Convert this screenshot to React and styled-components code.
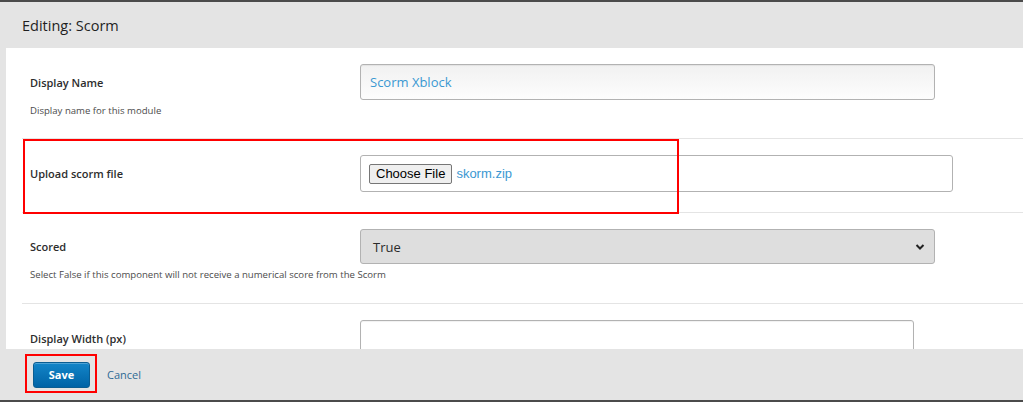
import React from 'react';
import styled, { createGlobalStyle } from 'styled-components';

const GlobalStyle = createGlobalStyle`
  html, body {
    margin: 0;
    padding: 0;
    background: #4b4b4b;
  }
  * {
    box-sizing: border-box;
  }
`;

const Backdrop = styled.div`
  height: 402px;
  padding: 2px 0 2px 0;
  background: #4b4b4b;
`;

const Modal = styled.div`
  height: 100%;
  display: flex;
  flex-direction: column;
  background: #e4e4e4;
  font-family: "Open Sans", "Liberation Sans", sans-serif;
`;

const Header = styled.div`
  height: 46px;
  flex: none;
  display: flex;
  align-items: center;
  padding: 0 22px;
`;

const Title = styled.h2`
  margin: 0;
  font-size: 14.5px;
  font-weight: 400;
  color: #1f1f1f;
`;

const Body = styled.div`
  flex: 1;
  padding-left: 6px;
  min-height: 0;
`;

const Panel = styled.div`
  height: 100%;
  background: #fff;
  overflow: hidden;
  padding-left: 16px;
`;

const FieldRow = styled.div`
  position: relative;
  padding: 16px 0 ${p => p.$bottom || 20}px 8px;
  border-bottom: 1px solid #e4e4e4;
`;

const FieldLine = styled.div`
  display: flex;
  align-items: center;
`;

const Label = styled.label`
  width: 330px;
  flex: none;
  font-size: 11px;
  font-weight: 600;
  color: #2d2d2d;
`;

const TextInput = styled.div`
  width: ${p => p.$width}px;
  height: ${p => p.$height || 36}px;
  display: flex;
  align-items: center;
  padding: 0 9px;
  border: 1px solid #b2b2b2;
  border-radius: 3px;
  background: ${p => (p.$plain ? '#fff' : 'linear-gradient(to bottom, #f1f1f1, #fdfdfd)')};
  box-shadow: inset 0 1px 1px rgba(0, 0, 0, 0.06);
  font-size: 13px;
  color: #3b98d2;
`;

const FileBox = styled.div`
  width: 593px;
  height: 37px;
  display: flex;
  align-items: center;
  gap: 4px;
  padding: 0 8px;
  border: 1px solid #b2b2b2;
  border-radius: 3px;
  font-family: "Liberation Sans", Arial, sans-serif;
`;

const ChooseButton = styled.span`
  display: inline-flex;
  align-items: center;
  height: 20px;
  padding: 0 6px;
  border: 1px solid #767676;
  border-radius: 2px;
  background: #efefef;
  font-size: 13px;
  color: #000;
`;

const FileName = styled.span`
  font-size: 13px;
  color: #3b98d2;
`;

const Select = styled.div`
  width: 575px;
  height: 35px;
  display: flex;
  align-items: center;
  justify-content: space-between;
  padding: 0 9px 0 12px;
  border: 1px solid #b2b2b2;
  border-radius: 3px;
  background: #dedede;
  font-size: 13px;
  color: #2b2b2b;
`;

const Help = styled.p`
  margin: 4px 0 0;
  font-size: 9.6px;
  line-height: 14px;
  color: #4c4c4c;
`;

const Highlight = styled.span`
  position: absolute;
  left: ${p => p.$left}px;
  top: ${p => p.$top}px;
  width: ${p => p.$width}px;
  height: ${p => p.$height}px;
  border: 2px solid #ff0000;
  pointer-events: none;
`;

const Footer = styled.div`
  height: 51px;
  flex: none;
  display: flex;
  align-items: center;
  gap: 17px;
  padding: 0 33px;
`;

const SaveWrap = styled.span`
  position: relative;
  display: inline-flex;
`;

const SaveButton = styled.button`
  width: 57px;
  height: 26px;
  border: 1px solid #0a5d92;
  border-radius: 3px;
  background: linear-gradient(to bottom, #1385c8, #0063a6);
  box-shadow: inset 0 1px 0 rgba(255, 255, 255, 0.25);
  color: #fff;
  font-family: "Open Sans", "Liberation Sans", sans-serif;
  font-size: 11px;
  font-weight: 700;
  cursor: pointer;
`;

const CancelLink = styled.a`
  font-size: 11px;
  color: #2f6a94;
  text-decoration: none;
`;

const Chevron = () => (
  <svg width="10" height="8" viewBox="0 0 10 8">
    <path d="M1.5 2 L5 5.5 L8.5 2" fill="none" stroke="#222" strokeWidth="2" />
  </svg>
);

export default function App() {
  return (
    <>
      <GlobalStyle />
      <Backdrop>
        <Modal>
          <Header>
            <Title>Editing: Scorm</Title>
          </Header>
          <Body>
            <Panel>
              <FieldRow>
                <FieldLine>
                  <Label>Display Name</Label>
                  <TextInput $width={575}>Scorm Xblock</TextInput>
                </FieldLine>
                <Help>Display name for this module</Help>
              </FieldRow>

              <FieldRow>
                <FieldLine>
                  <Label>Upload scorm file</Label>
                  <FileBox>
                    <ChooseButton>Choose File</ChooseButton>
                    <FileName>skorm.zip</FileName>
                  </FileBox>
                </FieldLine>
                <Highlight $left={1} $top={0} $width={656} $height={75} />
              </FieldRow>

              <FieldRow $bottom={21}>
                <FieldLine>
                  <Label>Scored</Label>
                  <Select>
                    <span>True</span>
                    <Chevron />
                  </Select>
                </FieldLine>
                <Help>Select False if this component will not receive a numerical score from the Scorm</Help>
              </FieldRow>

              <FieldRow>
                <FieldLine>
                  <Label>Display Width (px)</Label>
                  <TextInput $width={554} $height={36} $plain />
                </FieldLine>
              </FieldRow>
            </Panel>
          </Body>
          <Footer>
            <SaveWrap>
              <SaveButton>Save</SaveButton>
              <Highlight $left={-8} $top={-8} $width={72} $height={39} />
            </SaveWrap>
            <CancelLink href="#">Cancel</CancelLink>
          </Footer>
        </Modal>
      </Backdrop>
    </>
  );
}
